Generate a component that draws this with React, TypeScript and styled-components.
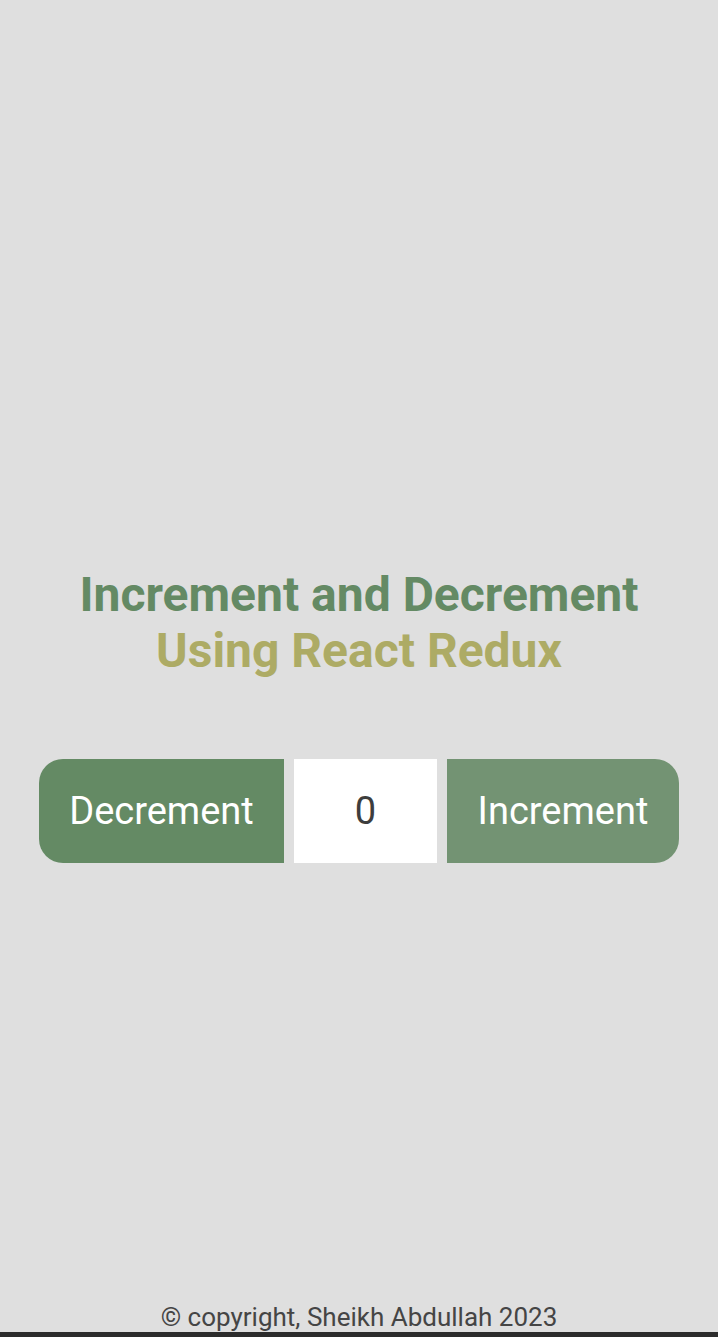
import * as React from "react";
import styled, { createGlobalStyle } from "styled-components";

const GlobalStyle = createGlobalStyle`
  html, body {
    margin: 0;
    padding: 0;
    background: #dfdfdf;
    font-family: Roboto, "Liberation Sans", sans-serif;
  }
`;

const Page = styled.div`
  min-height: 100vh;
  box-sizing: border-box;
  display: flex;
  flex-direction: column;
  background: #dfdfdf;
  border-bottom: 5px solid #2c2c2c;
`;

const Main = styled.main`
  flex: 1;
  display: flex;
  flex-direction: column;
  align-items: center;
  padding-top: 567px;
`;

const Title = styled.h1`
  margin: 0;
  font-size: 48px;
  font-weight: 700;
  line-height: 56px;
  text-align: center;
`;

const TitleLine = styled.span<{ $tone: string }>`
  display: block;
  color: ${(p) => p.$tone};
`;

const Counter = styled.div`
  margin-top: 80px;
  display: flex;
  gap: 10px;
  height: 104px;
`;

const Button = styled.button<{ $side: "left" | "right" }>`
  border: none;
  padding: 0;
  width: ${(p) => (p.$side === "left" ? "245px" : "232px")};
  background: ${(p) => (p.$side === "left" ? "#648a64" : "#739373")};
  color: #fff;
  font-family: Roboto, "Liberation Sans", sans-serif;
  font-size: 38px;
  border-radius: ${(p) => (p.$side === "left" ? "24px 0 0 24px" : "0 24px 24px 0")};
  cursor: pointer;
`;

const Count = styled.div`
  width: 143px;
  background: #fff;
  color: #3d3d3d;
  font-size: 38px;
  display: flex;
  align-items: center;
  justify-content: center;
`;

const Footer = styled.footer`
  text-align: center;
  color: #454545;
  font-size: 26px;
  line-height: 30px;
`;

const App: React.FC = () => {
  const [count, setCount] = React.useState(0);
  return (
    <Page>
      <GlobalStyle />
      <Main>
        <Title>
          <TitleLine $tone="#648a64">Increment and Decrement</TitleLine>
          <TitleLine $tone="#adab65">Using React Redux</TitleLine>
        </Title>
        <Counter>
          <Button $side="left" onClick={() => setCount(count - 1)}>
            Decrement
          </Button>
          <Count>{count}</Count>
          <Button $side="right" onClick={() => setCount(count + 1)}>
            Increment
          </Button>
        </Counter>
      </Main>
      <Footer>© copyright, Sheikh Abdullah 2023</Footer>
    </Page>
  );
};

export default App;
